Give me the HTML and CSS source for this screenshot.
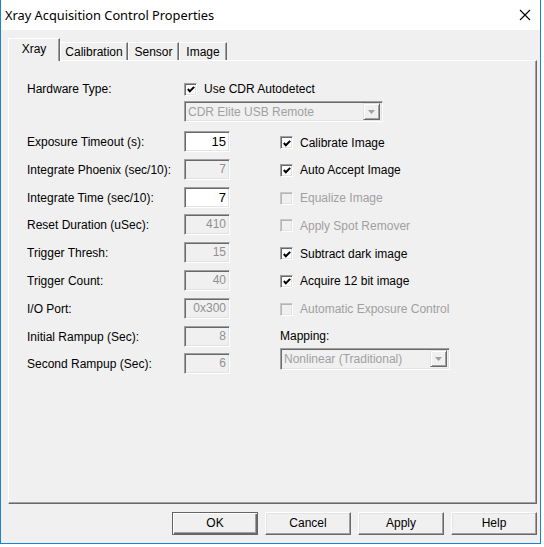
FILE: index.html
```html
<!DOCTYPE html>
<html>
<head>
<meta charset="utf-8">
<link rel="stylesheet" href="styles.css">
</head>
<body>
<div class="window">
  <div class="titlebar">
    <span class="title">Xray Acquisition Control Properties</span>
    <span class="close"><svg width="12" height="12" viewBox="0 0 12 12"><path d="M1 1 L11 11 M11 1 L1 11" stroke="#000" stroke-width="1.1" fill="none"/></svg></span>
  </div>
  <div class="body">
    <div class="tabs">
      <div class="tab active t-xray">Xray</div>
      <div class="tab t-cal">Calibration</div>
      <div class="tab t-sen">Sensor</div>
      <div class="tab t-img">Image</div>
    </div>
    <div class="panel">
      <div class="hw-row">
        <span class="label">Hardware Type:</span>
        <span class="check"><span class="box"><svg width="11" height="11" viewBox="0 0 11 11"><path d="M2 5 L4.2 7.4 L9 2.6" stroke="#000" stroke-width="2.2" fill="none"/></svg></span>Use CDR Autodetect</span>
      </div>
      <div class="combo-row">
        <div class="combo hw"><span class="ctext">CDR Elite USB Remote</span><span class="cbtn"><svg width="7" height="4" viewBox="0 0 7 4"><path d="M0 0 H7 L3.5 4 Z" fill="#a0a0a0"/></svg></span></div>
      </div>
      <div class="columns">
        <div class="left">
          <div class="row"><span class="label">Exposure Timeout (s):</span><span class="field">15</span></div>
          <div class="row"><span class="label">Integrate Phoenix (sec/10):</span><span class="field dis">7</span></div>
          <div class="row"><span class="label">Integrate Time (sec/10):</span><span class="field">7</span></div>
          <div class="row"><span class="label">Reset Duration (uSec):</span><span class="field dis">410</span></div>
          <div class="row"><span class="label">Trigger Thresh:</span><span class="field dis">15</span></div>
          <div class="row"><span class="label">Trigger Count:</span><span class="field dis">40</span></div>
          <div class="row"><span class="label">I/O Port:</span><span class="field dis">0x300</span></div>
          <div class="row"><span class="label">Initial Rampup (Sec):</span><span class="field dis">8</span></div>
          <div class="row"><span class="label">Second Rampup (Sec):</span><span class="field dis">6</span></div>
        </div>
        <div class="right">
          <div class="row"><span class="check"><span class="box"><svg width="11" height="11" viewBox="0 0 11 11"><path d="M2 5 L4.2 7.4 L9 2.6" stroke="#000" stroke-width="2.2" fill="none"/></svg></span>Calibrate Image</span></div>
          <div class="row"><span class="check"><span class="box"><svg width="11" height="11" viewBox="0 0 11 11"><path d="M2 5 L4.2 7.4 L9 2.6" stroke="#000" stroke-width="2.2" fill="none"/></svg></span>Auto Accept Image</span></div>
          <div class="row"><span class="check dis"><span class="box"></span>Equalize Image</span></div>
          <div class="row"><span class="check dis"><span class="box"></span>Apply Spot Remover</span></div>
          <div class="row"><span class="check"><span class="box"><svg width="11" height="11" viewBox="0 0 11 11"><path d="M2 5 L4.2 7.4 L9 2.6" stroke="#000" stroke-width="2.2" fill="none"/></svg></span>Subtract dark image</span></div>
          <div class="row"><span class="check"><span class="box"><svg width="11" height="11" viewBox="0 0 11 11"><path d="M2 5 L4.2 7.4 L9 2.6" stroke="#000" stroke-width="2.2" fill="none"/></svg></span>Acquire 12 bit image</span></div>
          <div class="row"><span class="check dis"><span class="box"></span>Automatic Exposure Control</span></div>
          <div class="maplabel">Mapping:</div>
          <div class="combo map"><span class="ctext">Nonlinear (Traditional)</span><span class="cbtn"><svg width="7" height="4" viewBox="0 0 7 4"><path d="M0 0 H7 L3.5 4 Z" fill="#a0a0a0"/></svg></span></div>
        </div>
      </div>
    </div>
    <div class="buttons">
      <div class="btn default">OK</div>
      <div class="btn">Cancel</div>
      <div class="btn">Apply</div>
      <div class="btn">Help</div>
    </div>
  </div>
</div>
</body>
</html>
```

FILE: styles.css
```css
html, body {
  margin: 0;
  padding: 0;
  background: #ffffff;
}
body {
  width: 544px;
  height: 547px;
  font-family: "Liberation Sans", Arial, sans-serif;
  font-size: 12px;
  color: #000;
}
.window {
  box-sizing: border-box;
  width: 541px;
  height: 544px;
  border: 1px solid #1883d7;
  border-top: none;
  background: #f0f0f0;
  display: flex;
  flex-direction: column;
}
.titlebar {
  height: 30px;
  background: #fff;
  display: flex;
  align-items: center;
  padding-left: 4px;
  flex: none;
}
.title {
  font-family: "Noto Sans", "Open Sans", sans-serif;
  font-size: 12.8px;
  flex: 1;
  padding-bottom: 1px;
}
.close {
  width: 12px;
  height: 12px;
  margin-right: 9px;
  display: flex;
}
.body {
  flex: 1;
  display: flex;
  flex-direction: column;
  padding: 8px 3px 8px 7px;
}
.tabs {
  height: 22px;
  display: flex;
  align-items: flex-end;
  flex: none;
  position: relative;
  z-index: 2;
}
.tab {
  box-sizing: border-box;
  height: 18px;
  border-top: 1px solid #fff;
  border-left: 1px solid #fff;
  border-right: 1px solid #696969;
  box-shadow: inset -1px 0 0 #a0a0a0;
  text-align: center;
  line-height: 16px;
  padding-top: 1px;
}
.tab.active {
  height: 23px;
  margin-bottom: -1px;
  background: #f0f0f0;
  line-height: 18px;
  padding-top: 1px;
}
.t-xray { width: 52px; }
.t-cal { width: 68px; }
.t-sen { width: 51px; }
.t-img { width: 48px; }
.panel {
  box-sizing: border-box;
  height: 444px;
  flex: none;
  border-top: 1px solid #fff;
  border-left: 1px solid #fff;
  border-right: 1px solid #696969;
  border-bottom: 1px solid #696969;
  box-shadow: inset -1px -1px 0 #a0a0a0;
  padding: 18px 0 0 18px;
}
.hw-row {
  display: flex;
  height: 20px;
  align-items: center;
}
.label {
  width: 157px;
  flex: none;
  white-space: nowrap;
}
.check {
  display: flex;
  align-items: center;
  white-space: nowrap;
}
.box {
  box-sizing: border-box;
  width: 13px;
  height: 13px;
  flex: none;
  background: #fff;
  border-top: 1px solid #a0a0a0;
  border-left: 1px solid #a0a0a0;
  border-right: 1px solid #fff;
  border-bottom: 1px solid #fff;
  box-shadow: inset 1px 1px 0 #696969, inset -1px -1px 0 #e3e3e3;
  margin-right: 7px;
  display: flex;
  align-items: center;
  justify-content: center;
}
.box svg {
  margin-left: 1px;
  margin-top: 1px;
}
.check.dis {
  color: #a0a0a0;
}
.check.dis .box {
  background: #f0f0f0;
  border-top-color: #c8c8c8;
  border-left-color: #c8c8c8;
  box-shadow: inset 1px 1px 0 #b4b4b4, inset -1px -1px 0 #e3e3e3;
}
.combo-row {
  display: flex;
  padding-left: 157px;
  margin-top: 2px;
}
.combo {
  box-sizing: border-box;
  height: 21px;
  background: #f0f0f0;
  border-top: 1px solid #a0a0a0;
  border-left: 1px solid #a0a0a0;
  border-right: 1px solid #fff;
  border-bottom: 1px solid #fff;
  box-shadow: inset 1px 1px 0 #696969, inset -1px -1px 0 #e3e3e3;
  display: flex;
  align-items: center;
  color: #a0a0a0;
  padding: 2px 2px 2px 3px;
}
.combo.hw { width: 199px; }
.combo.map { width: 170px; margin-top: 2px; height: 22px; }
.ctext {
  flex: 1;
  white-space: nowrap;
}
.cbtn {
  box-sizing: border-box;
  width: 17px;
  height: 17px;
  background: #f0f0f0;
  border-top: 1px solid #e3e3e3;
  border-left: 1px solid #e3e3e3;
  border-right: 1px solid #696969;
  border-bottom: 1px solid #696969;
  box-shadow: inset 1px 1px 0 #fff, inset -1px -1px 0 #a0a0a0;
  display: flex;
  align-items: center;
  justify-content: center;
}
.columns {
  display: flex;
  margin-top: 6px;
}
.left {
  width: 253px;
  flex: none;
}
.row {
  height: 27.8px;
  display: flex;
  align-items: center;
}
.left .row {
  align-items: flex-start;
}
.left .row .label {
  line-height: 21px;
  margin-top: 4px;
}
.field {
  box-sizing: border-box;
  width: 46px;
  height: 21px;
  margin-top: 3px;
  background: #fff;
  border-top: 1px solid #a0a0a0;
  border-left: 1px solid #a0a0a0;
  border-right: 1px solid #fff;
  border-bottom: 1px solid #fff;
  box-shadow: inset 1px 1px 0 #696969, inset -1px -1px 0 #e3e3e3;
  text-align: right;
  padding-right: 3px;
  line-height: 19px;
  font-size: 13px;
}
.field.dis {
  background: #f0f0f0;
  color: #909090;
  font-size: 12px;
}
.right {
  flex: 1;
}
.right .row {
  align-items: flex-start;
}
.right .row .check {
  height: 21px;
  margin-top: 4px;
}
.maplabel {
  margin-top: 3px;
  line-height: 20px;
}
.buttons {
  margin-top: 8px;
  height: 23px;
  display: flex;
  justify-content: flex-end;
  gap: 7px;
  flex: none;
}
.btn {
  box-sizing: border-box;
  width: 86px;
  height: 23px;
  background: #f0f0f0;
  border-top: 1px solid #fff;
  border-left: 1px solid #fff;
  border-right: 1px solid #696969;
  border-bottom: 1px solid #696969;
  box-shadow: inset -1px -1px 0 #a0a0a0, inset 1px 1px 0 #e3e3e3;
  text-align: center;
  line-height: 21px;
}
.btn.default {
  border: 1px solid #646464;
  box-shadow: inset 1px 1px 0 #fff, inset -1px -1px 0 #696969, inset -2px -2px 0 #a0a0a0;
}
```
